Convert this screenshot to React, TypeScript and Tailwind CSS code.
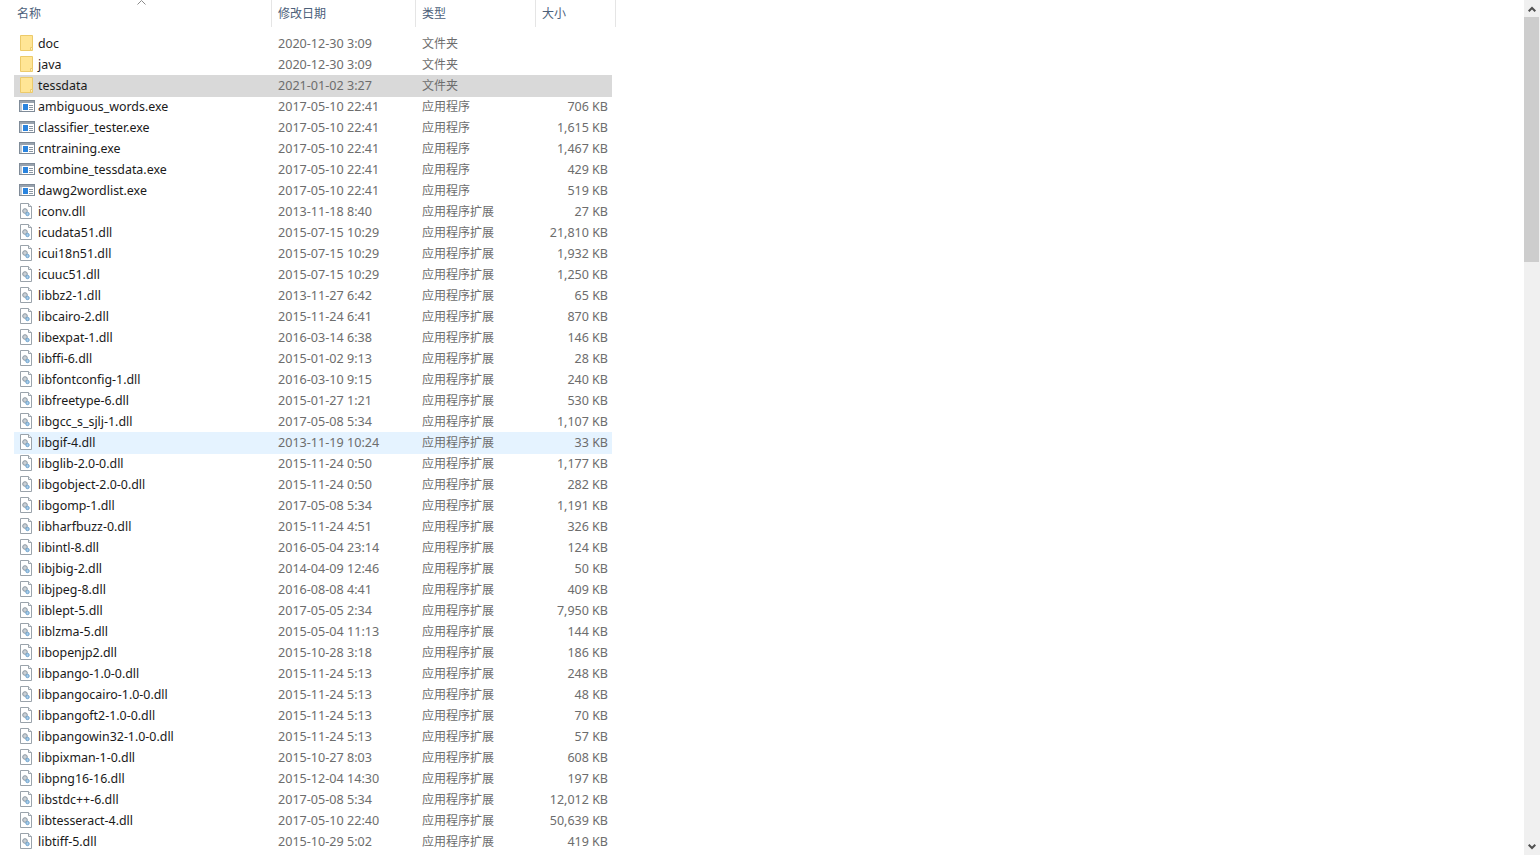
type Kind = "dir" | "exe" | "dll";
type FileRow = [string, string, Kind, string];

const rows: FileRow[] = [
  ["doc", "2020-12-30 3:09", "dir", ""],
  ["java", "2020-12-30 3:09", "dir", ""],
  ["tessdata", "2021-01-02 3:27", "dir", ""],
  ["ambiguous_words.exe", "2017-05-10 22:41", "exe", "706 KB"],
  ["classifier_tester.exe", "2017-05-10 22:41", "exe", "1,615 KB"],
  ["cntraining.exe", "2017-05-10 22:41", "exe", "1,467 KB"],
  ["combine_tessdata.exe", "2017-05-10 22:41", "exe", "429 KB"],
  ["dawg2wordlist.exe", "2017-05-10 22:41", "exe", "519 KB"],
  ["iconv.dll", "2013-11-18 8:40", "dll", "27 KB"],
  ["icudata51.dll", "2015-07-15 10:29", "dll", "21,810 KB"],
  ["icui18n51.dll", "2015-07-15 10:29", "dll", "1,932 KB"],
  ["icuuc51.dll", "2015-07-15 10:29", "dll", "1,250 KB"],
  ["libbz2-1.dll", "2013-11-27 6:42", "dll", "65 KB"],
  ["libcairo-2.dll", "2015-11-24 6:41", "dll", "870 KB"],
  ["libexpat-1.dll", "2016-03-14 6:38", "dll", "146 KB"],
  ["libffi-6.dll", "2015-01-02 9:13", "dll", "28 KB"],
  ["libfontconfig-1.dll", "2016-03-10 9:15", "dll", "240 KB"],
  ["libfreetype-6.dll", "2015-01-27 1:21", "dll", "530 KB"],
  ["libgcc_s_sjlj-1.dll", "2017-05-08 5:34", "dll", "1,107 KB"],
  ["libgif-4.dll", "2013-11-19 10:24", "dll", "33 KB"],
  ["libglib-2.0-0.dll", "2015-11-24 0:50", "dll", "1,177 KB"],
  ["libgobject-2.0-0.dll", "2015-11-24 0:50", "dll", "282 KB"],
  ["libgomp-1.dll", "2017-05-08 5:34", "dll", "1,191 KB"],
  ["libharfbuzz-0.dll", "2015-11-24 4:51", "dll", "326 KB"],
  ["libintl-8.dll", "2016-05-04 23:14", "dll", "124 KB"],
  ["libjbig-2.dll", "2014-04-09 12:46", "dll", "50 KB"],
  ["libjpeg-8.dll", "2016-08-08 4:41", "dll", "409 KB"],
  ["liblept-5.dll", "2017-05-05 2:34", "dll", "7,950 KB"],
  ["liblzma-5.dll", "2015-05-04 11:13", "dll", "144 KB"],
  ["libopenjp2.dll", "2015-10-28 3:18", "dll", "186 KB"],
  ["libpango-1.0-0.dll", "2015-11-24 5:13", "dll", "248 KB"],
  ["libpangocairo-1.0-0.dll", "2015-11-24 5:13", "dll", "48 KB"],
  ["libpangoft2-1.0-0.dll", "2015-11-24 5:13", "dll", "70 KB"],
  ["libpangowin32-1.0-0.dll", "2015-11-24 5:13", "dll", "57 KB"],
  ["libpixman-1-0.dll", "2015-10-27 8:03", "dll", "608 KB"],
  ["libpng16-16.dll", "2015-12-04 14:30", "dll", "197 KB"],
  ["libstdc++-6.dll", "2017-05-08 5:34", "dll", "12,012 KB"],
  ["libtesseract-4.dll", "2017-05-10 22:40", "dll", "50,639 KB"],
  ["libtiff-5.dll", "2015-10-29 5:02", "dll", "419 KB"],
];

const typeName = { dir: "文件夹", exe: "应用程序", dll: "应用程序扩展" };

function FileIcon({ kind }: { kind: Kind }) {
  if (kind === "dir") {
    return (
      <svg width="16" height="16" viewBox="0 0 16 16" className="shrink-0 mb-[2px]">
        <path d="M1.5 .5h12v15h-12z" fill="#ffe595" stroke="#ecca6a" />
        <path d="M11.5 15.5v-3h2" fill="#fff3c9" stroke="#ecca6a" />
      </svg>
    );
  }
  if (kind === "exe") {
    return (
      <svg width="16" height="16" viewBox="0 0 16 16" className="shrink-0 mb-[2px]">
        <rect x=".5" y="2.5" width="15" height="11" fill="#fff" stroke="#7f8b98" />
        <rect x="1" y="3" width="14" height="2" fill="#98a2ad" />
        <rect x="1" y="5" width="2" height="8" fill="#c3cad1" />
        <rect x="4" y="6" width="5" height="6" fill="#2a84de" />
        <path d="M10 7.5h4M10 9.5h4M10 11.5h4" stroke="#8b96a1" />
      </svg>
    );
  }
  return (
    <svg width="16" height="16" viewBox="0 0 16 16" className="shrink-0 mb-[2px]">
      <path d="M1.5 .5h8l3 3v12h-11z" fill="#fff" stroke="#9aa3ab" />
      <path d="M9.5 .5v3h3" fill="#eef1f3" stroke="#9aa3ab" />
      <circle cx="6" cy="8" r="2.3" fill="#c9d0d6" stroke="#8b97a1" />
      <circle cx="8.5" cy="11" r="1.7" fill="#a8cdea" stroke="#6fa3cc" />
    </svg>
  );
}

function HeaderCell({ label, className }: { label: string; className: string }) {
  return (
    <div className={`h-full border-r border-[#e5e5e5] flex items-center ${className}`}>
      {label}
    </div>
  );
}

function Row({ row }: { row: FileRow }) {
  const [name, date, kind, size] = row;
  const bg = name === "tessdata" ? "bg-[#d9d9d9]" : name === "libgif-4.dll" ? "bg-[#e5f3ff]" : "";
  return (
    <div className={`h-[22px] -mb-[1px] flex items-center pl-[5px] pr-[4px] ${bg}`}>
      <FileIcon kind={kind} />
      <span className="w-[243px] shrink-0 pl-[3px] text-[12.4px] text-[#1a1a1a] whitespace-nowrap">{name}</span>
      <span className="w-[143px] shrink-0 text-[12.6px] text-[#6d6d6d] whitespace-nowrap">{date}</span>
      <span className="w-[100px] shrink-0 pl-[1px] text-[12px] text-[#6d6d6d] whitespace-nowrap">{typeName[kind]}</span>
      <span className="flex-1 text-right text-[#6d6d6d] whitespace-nowrap">{size}</span>
    </div>
  );
}

export default function App() {
  return (
    <div className="h-[855px] flex overflow-hidden bg-white text-[12.5px] font-['Noto_Sans','Noto_Sans_CJK_SC',sans-serif]">
      <div className="flex-1 min-w-0">
        <div className="relative h-[27px] flex text-[12px] text-[#4c607a]">
          <svg width="9" height="5" viewBox="0 0 9 5" className="absolute left-[137px] top-0">
            <path d="M.5 4.5l4-4 4 4" fill="none" stroke="#8a8a8a" />
          </svg>
          <HeaderCell label="名称" className="w-[272px] pl-[17px]" />
          <HeaderCell label="修改日期" className="w-[144px] pl-[6px]" />
          <HeaderCell label="类型" className="w-[120px] pl-[6px]" />
          <HeaderCell label="大小" className="w-[80px] pl-[6px]" />
        </div>
        <div className="w-[598px] ml-[14px] mt-[6px]">
          {rows.map((row) => (
            <Row key={row[0]} row={row} />
          ))}
        </div>
      </div>
      <div className="w-4 shrink-0 bg-[#f0f0f0] flex flex-col">
        <div className="h-[17px] flex items-center justify-center">
          <svg width="8" height="6" viewBox="0 0 8 6">
            <path d="M.7 5.3L4 2l3.3 3.3" fill="none" stroke="#505050" strokeWidth="2" />
          </svg>
        </div>
        <div className="h-[245px] w-[15px] bg-[#cdcdcd]" />
        <div className="flex-1" />
        <div className="h-[17px] flex items-center justify-center">
          <svg width="8" height="6" viewBox="0 0 8 6">
            <path d="M.7 .7L4 4l3.3-3.3" fill="none" stroke="#505050" strokeWidth="2" />
          </svg>
        </div>
      </div>
    </div>
  );
}
